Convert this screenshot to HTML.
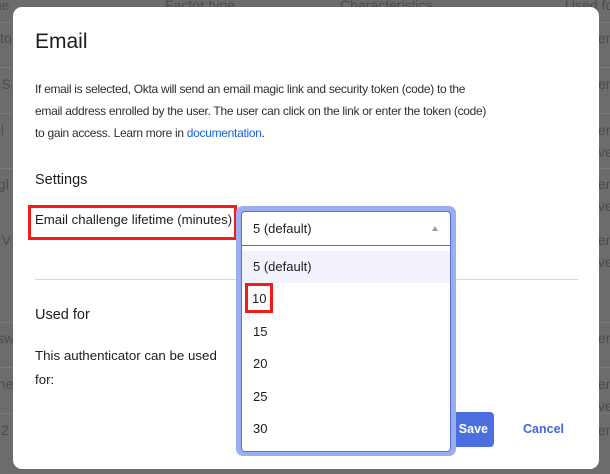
<!DOCTYPE html>
<html><head><style>
*{margin:0;padding:0;box-sizing:border-box}
body{width:610px;height:474px;background:#6c6c6c;position:relative;overflow:hidden;font-family:"Liberation Sans",sans-serif;color:#1d1d21}
.bg{position:absolute;color:#4c4c4c;font-size:14px;white-space:nowrap}
.ln{position:absolute;left:0;width:610px;height:1px;background:#7a7a7a}
.modal{position:absolute;left:13px;top:7px;width:586px;height:462px;background:#fff;border-radius:9px}
.t{position:absolute;white-space:nowrap}
.o{font-size:13px}
</style></head><body>
<div class="ln" style="top:22px"></div><div class="ln" style="top:67px"></div><div class="ln" style="top:113px"></div><div class="ln" style="top:168px"></div><div class="ln" style="top:322px"></div><div class="ln" style="top:367px"></div><div class="ln" style="top:413px"></div>
<div class="bg" style="left:-10px;top:-3px">me</div>
<div class="bg" style="left:165px;top:-3px">Factor type</div>
<div class="bg" style="left:340px;top:-3px">Characteristics</div>
<div class="bg" style="left:565px;top:-3px">Used fo</div>
<div class="bg" style="left:-10px;top:30px">isto</div>
<div class="bg" style="left:-10px;top:76px">o S</div>
<div class="bg" style="left:-10px;top:122px">ail</div>
<div class="bg" style="left:-10px;top:176px">ogl</div>
<div class="bg" style="left:-10px;top:232px">a V</div>
<div class="bg" style="left:-10px;top:330px">ssw</div>
<div class="bg" style="left:-10px;top:376px">one</div>
<div class="bg" style="left:-10px;top:422px">O2</div>
<div class="bg" style="left:598px;top:30px">ent</div>
<div class="bg" style="left:598px;top:76px">ent</div>
<div class="bg" style="left:598px;top:122px">ent</div>
<div class="bg" style="left:598px;top:144px">ve</div>
<div class="bg" style="left:598px;top:176px">ent</div>
<div class="bg" style="left:598px;top:198px">ve</div>
<div class="bg" style="left:598px;top:232px">ent</div>
<div class="bg" style="left:598px;top:254px">ve</div>
<div class="bg" style="left:598px;top:330px">ent</div>
<div class="bg" style="left:598px;top:376px">ent</div>
<div class="bg" style="left:598px;top:398px">ve</div>
<div class="bg" style="left:598px;top:422px">ent</div>
<div class="modal"></div>
<div class="t" style="left:35px;top:30px;font-size:21px">Email</div>
<div style="position:absolute;left:35px;top:78px;width:560px;font-size:12px;letter-spacing:-0.3px;line-height:22px;color:#2e2e33;white-space:nowrap">If email is selected, Okta will send an email magic link and security token (code) to the<br>email address enrolled by the user. The user can click on the link or enter the token (code)<br>to gain access. Learn more in <span style="color:#1662dd">documentation</span>.</div>
<div class="t" style="left:35px;top:172px;font-size:14.5px">Settings</div>
<div style="position:absolute;left:28px;top:205px;width:209px;height:35px;border:3px solid #f21b1b"></div>
<div class="t" style="left:35px;top:212px;font-size:13.2px">Email challenge lifetime (minutes)</div>
<div style="position:absolute;left:35px;top:279px;width:543px;height:1px;background:#d7d7dc"></div>
<div class="t" style="left:35px;top:307px;font-size:14.5px">Used for</div>
<div style="position:absolute;left:35px;top:344px;width:200px;font-size:13.3px;line-height:24px;white-space:nowrap">This authenticator can be used<br>for:</div>
<div style="position:absolute;left:448px;top:412px;width:46px;height:35px;background:#4b6fdf;border-radius:4px;color:#fff;font-weight:bold;font-size:12.5px;line-height:35px;text-align:right;padding-right:6px">Save</div>
<div class="t" style="left:523px;top:422px;color:#3d67dd;font-weight:bold;font-size:12.5px">Cancel</div>
<div style="position:absolute;left:236px;top:206px;width:220px;height:250px;background:#9aaef0;border-radius:7px"></div>
<div style="position:absolute;left:241px;top:211px;width:210px;height:35px;background:#fff;border:1px solid #5572d8;border-radius:4px 4px 0 0"></div>
<div class="t o" style="left:253px;top:221px">5 (default)</div>
<div style="position:absolute;left:432px;top:226px;width:0;height:0;border-left:3px solid transparent;border-right:3px solid transparent;border-bottom:5px solid #999"></div>
<div style="position:absolute;left:241px;top:246px;width:210px;height:206px;background:#fff;border:1px solid #5572d8;border-top:none;border-radius:0 0 4px 4px"></div>
<div style="position:absolute;left:242px;top:251px;width:208px;height:32px;background:#f1f2fb"></div>
<div class="t o" style="left:253px;top:259px">5 (default)</div>
<div style="position:absolute;left:245px;top:283px;width:28px;height:30px;border:3px solid #f21b1b"></div>
<div class="t o" style="left:252px;top:291px">10</div>
<div class="t o" style="left:253px;top:324px">15</div>
<div class="t o" style="left:253px;top:356px">20</div>
<div class="t o" style="left:253px;top:389px">25</div>
<div class="t o" style="left:253px;top:421px">30</div>
</body></html>
